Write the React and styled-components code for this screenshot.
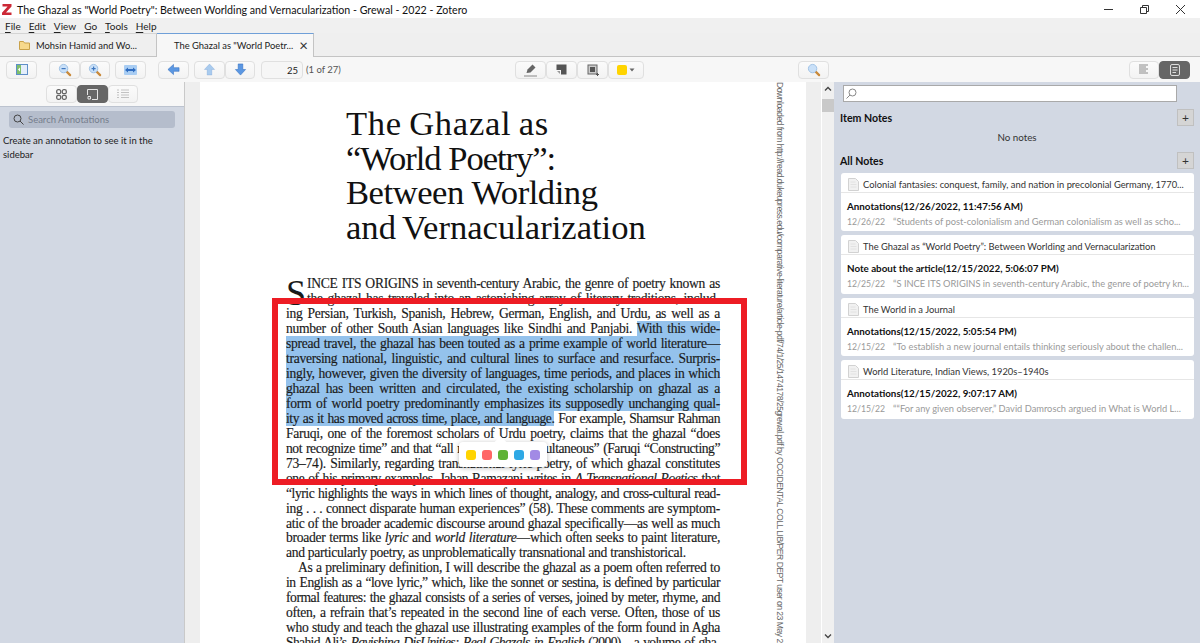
import styled, { createGlobalStyle } from "styled-components";

const GlobalStyle = createGlobalStyle`
  html, body {
    margin: 0;
    height: 643px;
    overflow: hidden;
    background: #fff;
  }
`;

const Window = styled.div`
  width: 1200px;
  height: 643px;
  display: flex;
  flex-direction: column;
  overflow: hidden;
  font-family: Lato, "Noto Sans", sans-serif;
  font-size: 9.5px;
  color: #222;
`;

const TitleBar = styled.div`
  height: 18px;
  display: flex;
  align-items: center;
  padding-left: 2px;
  background: #fff;
  color: #111;
  font-size: 10.65px;
  .title {
    margin-left: 5px;
    flex: 1;
  }
`;

const WinControls = styled.div`
  display: flex;
  align-items: center;
  gap: 25px;
  padding-right: 14px;
`;

const MenuBar = styled.div`
  height: 15px;
  display: flex;
  align-items: center;
  gap: 8px;
  padding-left: 5px;
  background: #f0f0f0;
  font-size: 10px;
  u {
    text-underline-offset: 2px;
  }
`;

const TabBar = styled.div`
  height: 24px;
  display: flex;
  background: #efefef;
  border-bottom: 1px solid #c4c4c4;
  box-sizing: border-box;
`;

const Tab = styled.div`
  width: 157px;
  box-sizing: border-box;
  height: ${(p) => (p.$active ? "24px" : "23px")};
  display: flex;
  align-items: center;
  gap: 6px;
  padding-left: ${(p) => (p.$active ? "17px" : "19px")};
  background: ${(p) => (p.$active ? "#f7f7f7" : "#efefef")};
  border-top: 1px solid ${(p) => (p.$active ? "#6f9fd8" : "#d4d4d4")};
  border-right: 1px solid #c4c4c4;
  white-space: nowrap;
  font-size: 9.4px;
  .close {
    font-size: 15px;
    line-height: 1;
    color: #333;
  }
`;

const Toolbar = styled.div`
  height: 25px;
  display: grid;
  grid-template-columns: 515px 283px 1fr auto;
  align-items: center;
  padding-right: 10px;
  background: #f7f7f7;
`;

const ToolSection = styled.div`
  display: flex;
  align-items: center;
  padding-left: ${(p) => p.$pad || 0}px;
`;

const ToolGroup = styled.div`
  display: flex;
  margin-right: ${(p) => p.$after || 0}px;
`;

const ToolButton = styled.div`
  width: ${(p) => p.$w || 31}px;
  height: 18px;
  display: flex;
  align-items: center;
  justify-content: center;
  box-sizing: border-box;
  background: ${(p) => (p.$active ? "#666" : "linear-gradient(#fbfbfb, #f3f3f3)")};
  border: 1px solid ${(p) => (p.$active ? "#666" : "#e0e0e0")};
  border-radius: 4px;
`;

const PageInput = styled.div`
  width: 42px;
  height: 18px;
  box-sizing: border-box;
  margin-left: 6px;
  padding-right: 4px;
  text-align: right;
  line-height: 17px;
  background: #f6f6f6;
  border: 1px solid #e0e0e0;
  border-radius: 4px;
`;

const PageCount = styled.span`
  margin-left: 3px;
  color: #555;
`;

const Main = styled.div`
  flex: 1;
  min-height: 0;
  display: flex;
`;

const LeftPane = styled.aside`
  width: 185px;
  flex: none;
  box-sizing: border-box;
  display: flex;
  flex-direction: column;
  background: #d2d8e3;
  border-right: 1px solid #c9c9c9;
`;

const SideTabs = styled.div`
  height: 24px;
  display: flex;
  justify-content: center;
  align-items: center;
  padding-right: 1px;
  background: #f7f7f7;
  border-bottom: 1px solid #bcc3cf;
`;

const SearchAnnotations = styled.div`
  margin: 4px 9px 0 9px;
  height: 17px;
  display: flex;
  align-items: center;
  gap: 4px;
  padding-left: 4px;
  background: #b5bdcc;
  border-radius: 3px;
  color: #767e8c;
`;

const EmptyHint = styled.p`
  margin: 6px 3px 0;
  width: 160px;
  line-height: 14px;
  color: #222;
`;

const Viewer = styled.div`
  flex: 1;
  min-width: 0;
  display: flex;
  padding-left: 15px;
  background: #eee;
`;

const Page = styled.div`
  position: relative;
  width: 606px;
  height: 561px;
  flex: none;
  display: flex;
  overflow: hidden;
  background: #fff;
  font-family: "Liberation Serif", "Times New Roman", serif;
  color: #1a1a1a;
`;

const PageText = styled.div`
  width: 434px;
  flex: none;
  margin-left: 86px;
  padding-top: 24px;
`;

const MarginNote = styled.div`
  writing-mode: vertical-rl;
  margin-left: 54px;
  height: 561px;
  white-space: nowrap;
  font-family: "Liberation Sans", Arial, sans-serif;
  font-size: 8.6px;
  letter-spacing: -0.5px;
  line-height: 11px;
  color: #666;
`;

const Heading = styled.h1`
  margin: 0 0 33px 60px;
  font-weight: 400;
  font-size: 34.6px;
  line-height: 34.5px;
  color: #111;
`;

const HeadLine = styled.span`
  display: block;
  letter-spacing: ${(p) => p.$ls || 0}px;
  word-spacing: ${(p) => p.$ws || 0}px;
`;

const Line = styled.div`
  height: 14.97px;
  line-height: 14.97px;
  font-size: 13.6px;
  letter-spacing: ${(p) => p.$ls ?? -0.3}px;
  -webkit-text-stroke: 0.15px #1a1a1a;
  text-align: justify;
  text-align-last: ${(p) => (p.$last ? "left" : "justify")};
  text-indent: ${(p) => (p.$indent ? "12px" : "0")};
  mark {
    background: #94c2ec;
    color: inherit;
  }
`;

const DropCap = styled.span`
  float: left;
  height: 29px;
  margin-right: 1px;
  font-size: 36px;
  line-height: 32px;
`;

const RedBox = styled.div`
  position: absolute;
  left: 72px;
  top: 216px;
  width: 475px;
  height: 187px;
  box-sizing: border-box;
  border: 6px solid #ed1c24;
  pointer-events: none;
`;

const ColorPopup = styled.div`
  position: absolute;
  left: 259px;
  top: 360px;
  width: 88px;
  height: 25px;
  box-sizing: border-box;
  display: flex;
  align-items: center;
  justify-content: center;
  gap: 6px;
  padding-top: 1px;
  background: #fff;
  border-radius: 4px;
  box-shadow: 0 1px 5px rgba(0, 0, 0, 0.28);
  &::before {
    content: "";
    position: absolute;
    left: 37px;
    top: -4px;
    width: 9px;
    height: 9px;
    background: #fff;
    transform: rotate(45deg);
  }
`;

const Swatch = styled.span`
  position: relative;
  width: 10px;
  height: 10px;
  border-radius: 3px;
  background: ${(p) => p.$color};
`;

const ScrollBar = styled.div`
  width: 12px;
  flex: none;
  margin-left: 1px;
  display: flex;
  flex-direction: column;
  align-items: center;
  justify-content: space-between;
  position: relative;
  padding: 4px 0;
  box-sizing: border-box;
  height: 561px;
  background: #f0f0f0;
  &::after {
    content: "";
    position: absolute;
    left: 0;
    right: 0;
    top: 17px;
    height: 13px;
    background: #c9c9c9;
  }
`;

const NotesPane = styled.aside`
  width: 366px;
  flex: none;
  display: flex;
  flex-direction: column;
  box-sizing: border-box;
  padding: 0 6px 0 6px;
  background: #d2d8e3;
`;

const NotesSearch = styled.div`
  width: 334px;
  height: 17px;
  box-sizing: border-box;
  margin: 3px 0 0 3px;
  display: flex;
  align-items: center;
  padding-left: 2px;
  background: #fff;
  border: 1px solid #a9a9a9;
`;

const SectionHead = styled.div`
  display: flex;
  align-items: center;
  justify-content: space-between;
  height: 17px;
  margin-top: ${(p) => p.$top}px;
  font-weight: 700;
  font-size: 10.6px;
  color: #111;
`;

const AddButton = styled.div`
  width: 17px;
  height: 17px;
  box-sizing: border-box;
  display: flex;
  align-items: center;
  justify-content: center;
  background: #d5d5d5;
  border: 1px solid #c0c0c0;
  font-size: 12px;
  font-weight: 400;
  color: #333;
`;

const NoNotes = styled.div`
  text-align: center;
  line-height: 14px;
  margin-top: 4px;
  font-size: 9.8px;
  color: #333;
`;

const NoteList = styled.div`
  display: flex;
  flex-direction: column;
  gap: 4px;
  margin: 4px 0 0 1px;
`;

const NoteCard = styled.div`
  height: 58.4px;
  background: #fff;
  border-radius: 3px;
`;

const CardTitle = styled.div`
  height: 20px;
  box-sizing: border-box;
  display: flex;
  align-items: center;
  gap: 4px;
  padding: 4px 0 0 7px;
  border-bottom: 1px solid #e6e6e6;
  color: #333;
  white-space: nowrap;
  font-size: 9.35px;
`;

const CardHeading = styled.div`
  margin: 6px 0 0 6px;
  line-height: 14px;
  font-weight: 700;
  font-size: 9.8px;
  color: #111;
`;

const CardMeta = styled.div`
  margin: 1px 0 0 6px;
  line-height: 15px;
  color: #9a9a9a;
  white-space: nowrap;
  font-size: 9.3px;
  span {
    margin-right: 8px;
    font-size: 8.7px;
  }
`;

const Glass = ({ sign }) => (
  <svg width="14" height="14" viewBox="0 0 15 15">
    <path d="M9.5 9.5l3.500 3.500" stroke="#c98a3c" strokeWidth="2.4" strokeLinecap="round" />
    <circle cx="6" cy="6" r="4.5" fill="#c9e0f8" stroke="#9cc0e4" />
    {sign && <path d="M3.800 6h4.400" stroke="#3f78bf" strokeWidth="1.3" />}
    {sign === "+" && <path d="M6 3.800v4.400" stroke="#3f78bf" strokeWidth="1.3" />}
  </svg>
);

const Arrow = ({ d, fill, faded }) => (
  <svg width="13" height="13" viewBox="0 0 14 14">
    <path d={d} fill={fill} stroke="#2f6cc0" strokeOpacity={faded ? 0.25 : 0.7} strokeWidth="0.8" />
  </svg>
);

const DocIcon = () => (
  <svg width="11" height="13" viewBox="0 0 11 13" style={{ flex: "none" }}>
    <path d="M.5.5h7l3 3v9H.5z" fill="#f1f1f1" stroke="#d2d2d2" />
    <path d="M2.5 4h5M2.5 6.5h6M2.5 9h6" stroke="#e2e2e2" />
  </svg>
);

const cards = [
  {
    title: "Colonial fantasies: conquest, family, and nation in precolonial Germany, 1770...",
    heading: "Annotations(12/26/2022, 11:47:56 AM)",
    date: "12/26/22",
    text: "“Students of post-colonialism and German colonialism as well as scho...",
  },
  {
    title: "The Ghazal as “World Poetry”: Between Worlding and Vernacularization",
    heading: "Note about the article(12/15/2022, 5:06:07 PM)",
    date: "12/25/22",
    text: "“S INCE ITS ORIGINS in seventh-century Arabic, the genre of poetry kn...",
  },
  {
    title: "The World in a Journal",
    heading: "Annotations(12/15/2022, 5:05:54 PM)",
    date: "12/15/22",
    text: "“To establish a new journal entails thinking seriously about the challen...",
  },
  {
    title: "World Literature, Indian Views, 1920s–1940s",
    heading: "Annotations(12/15/2022, 9:07:17 AM)",
    date: "12/15/22",
    text: "““For any given observer,” David Damrosch argued in What is World L...",
  },
];

const swatches = ["#ffd400", "#ff6666", "#5fb236", "#2ea8e5", "#a28ae5"];

export default function App() {
  return (
    <Window>
      <GlobalStyle />
      <TitleBar>
        <svg width="10" height="11" viewBox="0 0 10 11">
          <path d="M.5 0h9v2.4L4 8.6h5.5V11H0V8.7L5.6 2.4H.5z" fill="#cc2936" />
        </svg>
        <span className="title">
          The Ghazal as "World Poetry": Between Worlding and Vernacularization - Grewal - 2022 - Zotero
        </span>
        <WinControls>
          <svg width="11" height="11" viewBox="0 0 11 11">
            <path d="M1 5.5h9" stroke="#333" />
          </svg>
          <svg width="11" height="11" viewBox="0 0 11 11" fill="none" stroke="#333">
            <path d="M1.5 3.5h6v6h-6zM3.5 3.500v-2h6v6h-2" />
          </svg>
          <svg width="11" height="11" viewBox="0 0 11 11">
            <path d="M1 1l9 9M10 1l-9 9" stroke="#333" />
          </svg>
        </WinControls>
      </TitleBar>

      <MenuBar>
        <span><u>F</u>ile</span>
        <span><u>E</u>dit</span>
        <span><u>V</u>iew</span>
        <span><u>G</u>o</span>
        <span><u>T</u>ools</span>
        <span><u>H</u>elp</span>
      </MenuBar>

      <TabBar>
        <Tab>
          <svg width="11" height="9" viewBox="0 0 11 9">
            <path d="M.5.5h4l1 1.5h5v6.5H.5z" fill="#f7d98c" stroke="#c9a24a" />
          </svg>
          Mohsin Hamid and Wo...
        </Tab>
        <Tab $active>
          The Ghazal as "World Poetr...
          <span className="close">×</span>
        </Tab>
      </TabBar>

      <Toolbar>
        <ToolSection $pad={6}>
          <ToolGroup $after={12}>
            <ToolButton>
              <svg width="12" height="11" viewBox="0 0 12 11">
                <rect x=".5" y=".5" width="11" height="10" fill="#e4eefb" stroke="#5f8fc8" />
                <rect x="1" y="1" width="4" height="9" fill="#7fbf6a" />
                <path d="M4 3.500L2 5.500l2 2z" fill="#fff" />
              </svg>
            </ToolButton>
          </ToolGroup>
          <ToolGroup $after={5}>
            <ToolButton><Glass sign="-" /></ToolButton>
            <ToolButton $w={30}><Glass sign="+" /></ToolButton>
          </ToolGroup>
          <ToolGroup $after={12}>
            <ToolButton>
              <svg width="13" height="10" viewBox="0 0 13 10">
                <rect x="0" y="0" width="13" height="10" rx="1" fill="#a9cdf3" />
                <path d="M1 5l3-2.500V4h5V2.500L12 5 9 7.500V6H4v1.500z" fill="#2f6cc0" />
              </svg>
            </ToolButton>
          </ToolGroup>
          <ToolGroup $after={5}>
            <ToolButton>
              <Arrow d="M1 7l6-5.500V5h6v4H7v3.500z" fill="#5b97e2" />
            </ToolButton>
          </ToolGroup>
          <ToolGroup>
            <ToolButton>
              <Arrow faded d="M7 1L12.500 7H9.500v6h-5V7H1.500z" fill="#a9cbee" />
            </ToolButton>
            <ToolButton $w={30}>
              <Arrow d="M7 13L12.500 7H9.500V1h-5v6H1.500z" fill="#5b97e2" />
            </ToolButton>
          </ToolGroup>
          <PageInput>25</PageInput>
          <PageCount>(1 of 27)</PageCount>
        </ToolSection>

        <ToolSection>
          <ToolGroup>
            <ToolButton>
              <svg width="14" height="14" viewBox="0 0 14 14">
                <path d="M2.500 10l1-3.500L8.500 1.500l3 3-5 5z" fill="#666" />
                <path d="M0 13h13" stroke="#888" />
              </svg>
            </ToolButton>
            <ToolButton>
              <svg width="11" height="11" viewBox="0 0 11 11">
                <path d="M.5.500h10v10H5V6H.5z" fill="#555" />
                <path d="M1 7h3v3z" fill="#999" />
              </svg>
            </ToolButton>
            <ToolButton>
              <svg width="12" height="12" viewBox="0 0 12 12">
                <rect x="1" y="1" width="9" height="9" fill="#ccc" stroke="#666" />
                <rect x="3" y="3" width="5" height="5" fill="#555" />
                <path d="M9 10.500h3M10.500 9v3" stroke="#555" />
              </svg>
            </ToolButton>
            <ToolButton $w={36}>
              <svg width="18" height="10" viewBox="0 0 18 10">
                <rect width="10" height="10" rx="2" fill="#ffd400" />
                <path d="M12.500 3.500h5L15 6.500z" fill="#666" />
              </svg>
            </ToolButton>
          </ToolGroup>
        </ToolSection>

        <ToolSection>
          <ToolButton><Glass /></ToolButton>
        </ToolSection>

        <ToolSection>
          <ToolGroup>
            <ToolButton $w={30}>
              <svg width="10" height="11" viewBox="0 0 10 11" stroke="#8a8a8a">
                <path d="M0 1h9M0 3h7M0 5h9M0 7h7M0 9h9" />
              </svg>
            </ToolButton>
            <ToolButton $active $w={31}>
              <svg width="10" height="12" viewBox="0 0 10 12" fill="none" stroke="#ddd">
                <rect x=".5" y=".5" width="9" height="11" rx="1.5" />
                <path d="M2.500 3.500h5M2.500 6h5M2.500 8.500h3.500" />
              </svg>
            </ToolButton>
          </ToolGroup>
        </ToolSection>
      </Toolbar>

      <Main>
        <LeftPane>
          <SideTabs>
            <ToolButton>
              <svg width="11" height="11" viewBox="0 0 11 11" fill="none" stroke="#666" strokeWidth="1.300">
                <rect x=".7" y=".7" width="4" height="4" rx="1.500" />
                <rect x="6.300" y=".7" width="4" height="4" rx="1.500" />
                <rect x=".7" y="6.300" width="4" height="4" rx="1.500" />
                <rect x="6.300" y="6.300" width="4" height="4" rx="1.500" />
              </svg>
            </ToolButton>
            <ToolButton $active>
              <svg width="11" height="11" viewBox="0 0 11 11" fill="none" stroke="#e4e4e4">
                <path d="M.5 6V.5h10v10H5" />
                <path d="M1 7.500h2.500V10H1z" />
              </svg>
            </ToolButton>
            <ToolButton $w={30}>
              <svg width="13" height="10" viewBox="0 0 13 10" stroke="#c2c2c2">
                <path d="M1 1h2M5 1h8M1 3.500h2M5 3.500h8M1 6h2M5 6h8M1 8.500h2M5 8.500h8" />
              </svg>
            </ToolButton>
          </SideTabs>
          <SearchAnnotations>
            <svg width="11" height="11" viewBox="0 0 11 11" fill="none" stroke="#444">
              <circle cx="4.5" cy="4.5" r="3.5" />
              <path d="M7 7l3.5 3.5" />
            </svg>
            Search Annotations
          </SearchAnnotations>
          <EmptyHint>Create an annotation to see it in the sidebar</EmptyHint>
        </LeftPane>

        <Viewer>
          <Page>
            <PageText>
              <Heading>
                <HeadLine $ls={0.7} $ws={-2}>The Ghazal as</HeadLine>
                <HeadLine $ls={-1.05}>“World Poetry”:</HeadLine>
                <HeadLine $ls={-0.45}>Between Worlding</HeadLine>
                <HeadLine $ws={-2}>and Vernacularization</HeadLine>
              </Heading>

              <DropCap>S</DropCap>
              <Line>INCE ITS ORIGINS in seventh-century Arabic, the genre of poetry known as</Line>
              <Line>the ghazal has traveled into an astonishing array of literary traditions, includ-</Line>
              <Line>ing Persian, Turkish, Spanish, Hebrew, German, English, and Urdu, as well as a</Line>
              <Line>number of other South Asian languages like Sindhi and Panjabi. <mark>With this wide-</mark></Line>
              <Line><mark>spread travel, the ghazal has been touted as a prime example of world literature—</mark></Line>
              <Line><mark>traversing national, linguistic, and cultural lines to surface and resurface. Surpris-</mark></Line>
              <Line><mark>ingly, however, given the diversity of languages, time periods, and places in which</mark></Line>
              <Line><mark>ghazal has been written and circulated, the existing scholarship on ghazal as a</mark></Line>
              <Line><mark>form of world poetry predominantly emphasizes its supposedly unchanging qual-</mark></Line>
              <Line $ls={-0.45}><mark>ity as it has moved across time, place, and language.</mark> For example, Shamsur Rahman</Line>
              <Line>Faruqi, one of the foremost scholars of Urdu poetry, claims that the ghazal “does</Line>
              <Line $ls={-0.45}>not recognize time” and that “all moments are simultaneous” (Faruqi “Constructing”</Line>
              <Line>73–74). Similarly, regarding transnational lyric poetry, of which ghazal constitutes</Line>
              <Line $ls={-0.45}>one of his primary examples, Jahan Ramazani writes in <i>A Transnational Poetics</i> that</Line>
              <Line $ls={-0.45}>“lyric highlights the ways in which lines of thought, analogy, and cross-cultural read-</Line>
              <Line>ing . . . connect disparate human experiences” (58). These comments are symptom-</Line>
              <Line>atic of the broader academic discourse around ghazal specifically—as well as much</Line>
              <Line>broader terms like <i>lyric</i> and <i>world literature</i>—which often seeks to paint literature,</Line>
              <Line $last>and particularly poetry, as unproblematically transnational and transhistorical.</Line>
              <Line $indent>As a preliminary definition, I will describe the ghazal as a poem often referred to</Line>
              <Line $ls={-0.45}>in English as a “love lyric,” which, like the sonnet or sestina, is defined by particular</Line>
              <Line $ls={-0.45}>formal features: the ghazal consists of a series of verses, joined by meter, rhyme, and</Line>
              <Line>often, a refrain that’s repeated in the second line of each verse. Often, those of us</Line>
              <Line>who study and teach the ghazal use illustrating examples of the form found in Agha</Line>
              <Line $ls={-0.65}>Shahid Ali’s <i>Ravishing DisUnities: Real Ghazals in English</i> (2000)—a volume of gha-</Line>
            </PageText>
            <MarginNote>
              Downloaded from http://read.dukeupress.edu/comparative-literature/article-pdf/74/1/25/1474178/25grewal.pdf by OCCIDENTAL COLL LIB/PER DEPT user on 23 May 2023
            </MarginNote>
            <RedBox />
            <ColorPopup>
              {swatches.map((c) => (
                <Swatch key={c} $color={c} />
              ))}
            </ColorPopup>
          </Page>
        </Viewer>

        <ScrollBar>
          <svg width="8" height="6" viewBox="0 0 8 6" fill="none" stroke="#444" strokeWidth="1.3">
            <path d="M1 4.5L4 1.5l3 3" />
          </svg>
          <svg width="8" height="6" viewBox="0 0 8 6" fill="none" stroke="#444" strokeWidth="1.3">
            <path d="M1 1.5L4 4.500l3-3" />
          </svg>
        </ScrollBar>

        <NotesPane>
          <NotesSearch>
            <svg width="11" height="11" viewBox="0 0 11 11" fill="none" stroke="#888">
              <circle cx="6.5" cy="4.5" r="3.5" />
              <path d="M4 7L.5 10.5" />
            </svg>
          </NotesSearch>
          <SectionHead $top={7}>
            Item Notes
            <AddButton>+</AddButton>
          </SectionHead>
          <NoNotes>No notes</NoNotes>
          <SectionHead $top={8}>
            All Notes
            <AddButton>+</AddButton>
          </SectionHead>
          <NoteList>
            {cards.map((card) => (
              <NoteCard key={card.title}>
                <CardTitle>
                  <DocIcon />
                  {card.title}
                </CardTitle>
                <CardHeading>{card.heading}</CardHeading>
                <CardMeta>
                  <span>{card.date}</span>
                  {card.text}
                </CardMeta>
              </NoteCard>
            ))}
          </NoteList>
        </NotesPane>
      </Main>
    </Window>
  );
}
